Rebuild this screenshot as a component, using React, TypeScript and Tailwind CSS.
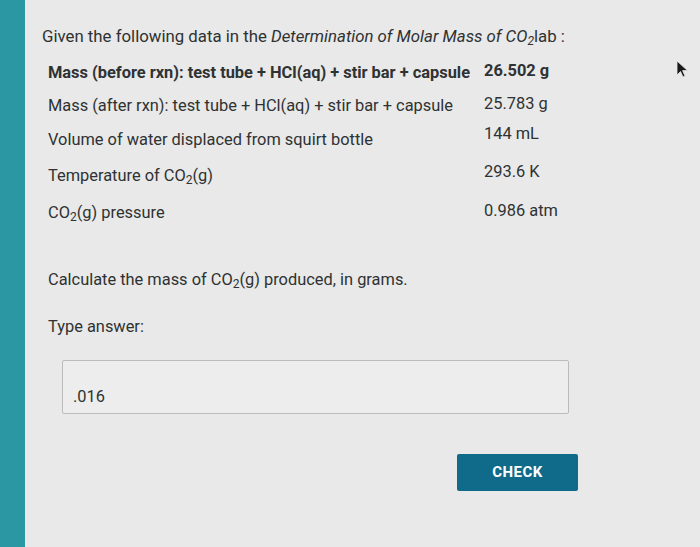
import { useState } from "react";

const Sub = () => <sub className="text-[12px] relative top-[3px]">2</sub>;

const rows = [
    { label: <>Mass (before rxn): test tube + HCl(aq) + stir bar + capsule</>, value: "26.502 g", bold: true, h: "h-[33px]", off: "" },
    { label: <>Mass (after rxn): test tube + HCl(aq) + stir bar + capsule</>, value: "25.783 g", h: "h-[34px]", off: "" },
    { label: <>Volume of water displaced from squirt bottle</>, value: "144 mL", h: "h-[36px]", off: "-mt-[4px]" },
    { label: <>Temperature of CO<Sub />(g)</>, value: "293.6 K", h: "h-[37px]", off: "-mt-[2px]" },
    { label: <>CO<Sub />(g) pressure</>, value: "0.986 atm", h: "h-[38px]", off: "" },
];

export default function App() {
    const [answer, setAnswer] = useState(".016");

    return (
        <div className="flex w-[700px] h-[547px] overflow-hidden bg-[#e8e9e8] text-[#2f3233]" style={{ fontFamily: "Roboto, 'Liberation Sans', sans-serif" }}>
            {/* teal side bar */}
            <div className="w-[25px] shrink-0 bg-[#2b97a3]" />

            <div className="relative flex-1 flex flex-col pl-[17px] pt-[24px]">
                <p className="text-[16.8px] leading-[24px]">
                    Given the following data in the <i>Determination of Molar Mass of CO<Sub /></i>lab :
                </p>

                {/* data table */}
                <div className="flex flex-col mt-[12px] pl-[6px]">
                    {rows.map((r, i) => (
                        <div key={i} className={`flex items-start ${r.h} text-[16.4px] leading-[22px] ${r.bold ? "font-bold" : ""}`}>
                            <div className="w-[436px] shrink-0 pt-[2px]">{r.label}</div>
                            <div className={r.off}>{r.value}</div>
                        </div>
                    ))}
                </div>

                <p className="mt-[31px] pl-[6px] text-[16.4px] leading-[22px]">
                    Calculate the mass of CO<Sub />(g) produced, in grams.
                </p>

                <p className="mt-[25px] pl-[6px] text-[16.4px] leading-[22px]">Type answer:</p>

                {/* answer field */}
                <div className="mt-[22px] ml-[20px] w-[507px] h-[54px] border border-[#b9bcbc] rounded-[2px] bg-[#ecedec] flex items-end pb-[3px] px-[10px]">
                    <input
                        value={answer}
                        onChange={(e) => setAnswer(e.target.value)}
                        className="w-full bg-transparent outline-none text-[16.4px] text-[#2f3233]"
                    />
                </div>

                {/* check button */}
                <div className="flex mt-[40px] pl-[415px]">
                    <button className="w-[121px] h-[37px] rounded-[2px] bg-[#0f6b89] text-white font-bold text-[15px] tracking-[0.5px]">
                        CHECK
                    </button>
                </div>

                {/* mouse pointer */}
                <svg className="absolute left-[650px] top-[60px]" width="14" height="18" viewBox="0 0 14 18">
                    <path d="M2 1 L2 15 L5.5 11.5 L8 17 L10 16 L7.6 10.6 L12.5 10.6 Z" fill="#1a1a1a" stroke="#e8e9e8" strokeWidth="0.8" />
                </svg>
            </div>
        </div>
    );
}
